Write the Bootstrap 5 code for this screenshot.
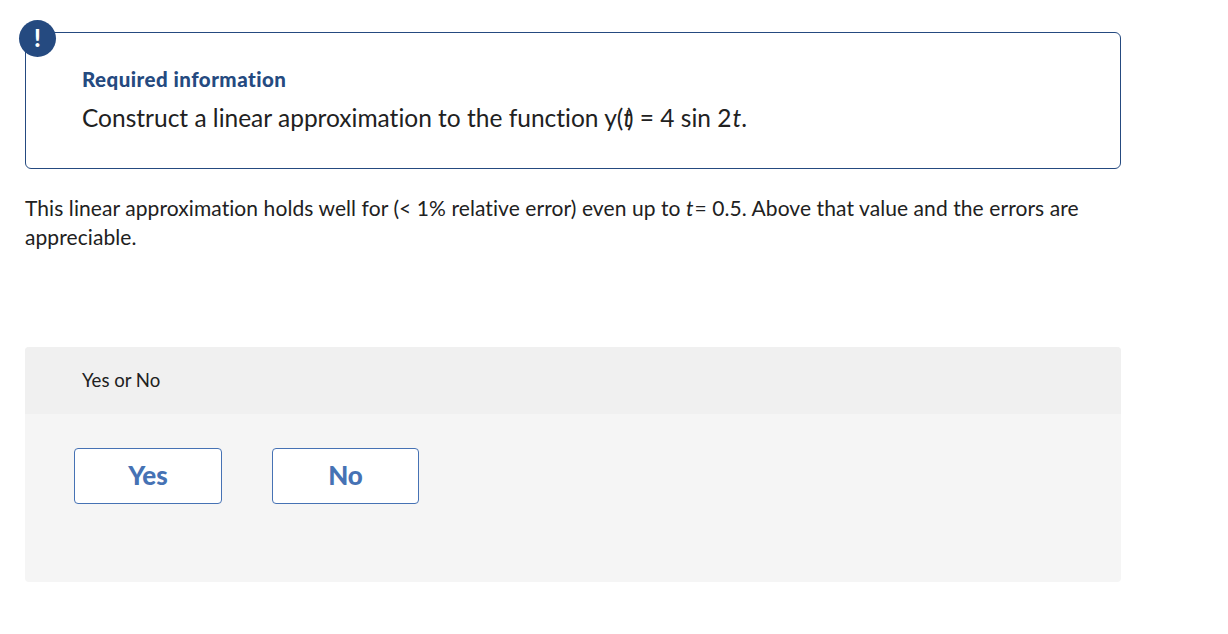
<!DOCTYPE html>
<html lang="en">
<head>
<meta charset="utf-8">
<title>Required information</title>
<link href="https://cdn.jsdelivr.net/npm/bootstrap@5.3.0/dist/css/bootstrap.min.css" rel="stylesheet">
<style>
body{font-family:"Lato","Liberation Sans",sans-serif;color:#212121;background:#fff;font-variant-ligatures:none;}
.page-wrap{width:1096px;margin-left:25px;padding-top:32px;}
.req-box{height:137px;border:1px solid #254a80;border-radius:6px;padding:33px 56px 0;}
.req-badge{top:-13px;left:-7px;width:37px;height:37px;background:#254a80;color:#fff;font-weight:900;font-size:24px;line-height:36px;}
.req-title{color:#254a80;font-size:20.5px;line-height:26px;font-weight:900;letter-spacing:.47px;margin-bottom:10px;}
.req-text{font-size:24.5px;line-height:32px;}
.t-over{margin-right:-5px;}
.t-end{margin-left:1px;}
.body-text{margin-top:24px;font-size:21px;line-height:29px;margin-bottom:0;height:60px;letter-spacing:.08px;}
.t-gap{margin-right:1px;}
.ans-panel{margin-top:94px;height:235px;background:#f5f5f5;border-radius:4px;overflow:hidden;}
.ans-head{height:67px;background:#f0f0f0;padding:21px 57px 0;font-size:18.6px;line-height:25px;}
.ans-body{padding:34px 49px 0;gap:50px;}
.ans-btn{height:56px;background:#fff;border:1px solid #4672b4;border-radius:4px;color:#4672b4;font-size:26px;font-weight:900;padding:0 0 2px;line-height:1;}
.ans-btn:hover{background:#fff;color:#4672b4;border-color:#4672b4;}
.w-yes{width:148px;}
.w-no{width:147px;}
</style>
</head>
<body>
<div class="page-wrap">
  <div class="req-box position-relative">
    <div class="req-badge position-absolute rounded-circle text-center">!</div>
    <div class="req-title">Required information</div>
    <div class="req-text">Construct a linear approximation to the function y(<i class="t-over">t</i>) = 4 sin 2<i class="t-end">t</i>.</div>
  </div>
  <p class="body-text">This linear approximation holds well for (&lt; 1% relative error) even up to <i class="t-gap">t</i>= 0.5. Above that value and the errors are appreciable.</p>
  <div class="ans-panel">
    <div class="ans-head">Yes or No</div>
    <div class="ans-body d-flex">
      <button type="button" class="btn ans-btn w-yes">Yes</button>
      <button type="button" class="btn ans-btn w-no">No</button>
    </div>
  </div>
</div>
<script src="https://cdn.jsdelivr.net/npm/bootstrap@5.3.0/dist/js/bootstrap.bundle.min.js"></script>
</body>
</html>
